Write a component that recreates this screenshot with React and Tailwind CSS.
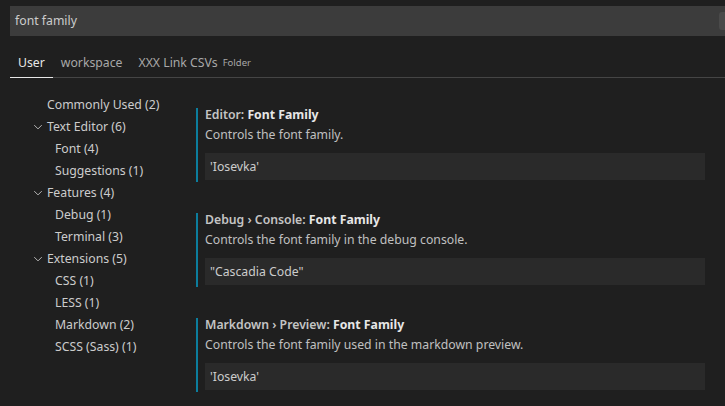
import React from "react";

const tree = [
  { label: "Commonly Used (2)", level: 0 },
  { label: "Text Editor (6)", level: 0, open: true },
  { label: "Font (4)", level: 1 },
  { label: "Suggestions (1)", level: 1 },
  { label: "Features (4)", level: 0, open: true },
  { label: "Debug (1)", level: 1 },
  { label: "Terminal (3)", level: 1 },
  { label: "Extensions (5)", level: 0, open: true },
  { label: "CSS (1)", level: 1 },
  { label: "LESS (1)", level: 1 },
  { label: "Markdown (2)", level: 1 },
  { label: "SCSS (Sass) (1)", level: 1 },
];

const settings = [
  {
    category: "Editor: ",
    key: "Font Family",
    desc: "Controls the font family.",
    value: "'Iosevka'",
  },
  {
    category: "Debug › Console: ",
    key: "Font Family",
    desc: "Controls the font family in the debug console.",
    value: '"Cascadia Code"',
  },
  {
    category: "Markdown › Preview: ",
    key: "Font Family",
    desc: "Controls the font family used in the markdown preview.",
    value: "'Iosevka'",
  },
];

const Chevron = () => (
  <svg width="12" height="12" viewBox="0 0 16 16" className="text-[#c5c5c5]">
    <path d="M3 5.5l5 5 5-5" fill="none" stroke="currentColor" strokeWidth="1.2" />
  </svg>
);

const App = () => {
  return (
    <div
      className="w-[725px] h-[406px] bg-[#1f1f1f] overflow-hidden text-[12.25px]"
      style={{ fontFamily: '"Noto Sans", "Open Sans", sans-serif' }}
    >
      {/* search */}
      <div className="relative ml-[10px] mt-[6px] h-[30px] bg-[#3c3c3c] flex items-center pl-[5px] text-[#cccccc]">
        font family
        <div className="absolute right-0 top-[6px] w-[6px] h-[18px] rounded-l-[3px] bg-[#4a4a4a]" />
      </div>

      {/* tabs */}
      <div className="ml-[10px] h-[42px] flex items-end border-b border-[#454545]">
        <div className="h-[30px] pt-[2px] px-[8px] flex items-center text-[#e7e7e7] border-b border-[#e7e7e7] -mb-px">
          User
        </div>
        <div className="h-[30px] pt-[2px] px-[8px] flex items-center text-[#a8a8a8]">workspace</div>
        <div className="h-[30px] pt-[2px] px-[8px] flex items-center text-[#a8a8a8]">
          XXX Link CSVs
          <span className="ml-[5px] text-[9.5px]">Folder</span>
        </div>
      </div>

      <div className="flex">
        {/* tree */}
        <div className="w-[196px] shrink-0 pt-[16px]">
          {tree.map((item) => (
            <div
              key={item.label}
              className={
                "h-[22px] flex items-center text-[#cccccc] " +
                (item.level === 1 ? "pl-[55px]" : "pl-[47px]")
              }
            >
              {item.open && (
                <span className="-ml-[15px] mr-[3px] flex">
                  <Chevron />
                </span>
              )}
              {item.label}
            </div>
          ))}
        </div>

        {/* settings */}
        <div className="flex-1 pr-[20px] pt-[30px] flex flex-col gap-[31px]">
          {settings.map((s) => (
            <div key={s.desc} className="flex">
              <div className="w-[2px] bg-[#0c7d9d]" />
              <div className="flex-1 pl-[7px] pb-[2px]">
                <div className="leading-[13px] font-semibold text-[#c4c4c4]">
                  {s.category}
                  <span className="text-[#e7e7e7] font-bold">{s.key}</span>
                </div>
                <div className="mt-[5px] leading-[18px] text-[#c0c0c0]">{s.desc}</div>
                <div className="mt-[9px] h-[27px] pt-[1px] bg-[#2a2a2a] flex items-center pl-[5px] text-[#cccccc]">
                  {s.value}
                </div>
              </div>
            </div>
          ))}
        </div>
      </div>
    </div>
  );
};

export default App;
